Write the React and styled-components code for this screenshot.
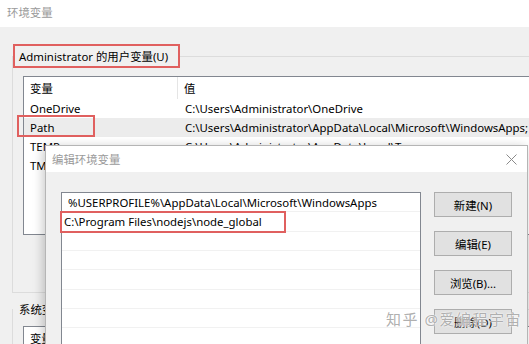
import React from 'react'
import styled, { createGlobalStyle } from 'styled-components'

const GlobalStyle = createGlobalStyle`
  html, body {
    margin: 0;
    padding: 0;
    background: #f0f0f0;
  }
  body {
    font-family: "Noto Sans", "Noto Sans CJK SC", sans-serif;
    font-size: 11.4px;
    color: #000;
  }
`

const Screen = styled.div`
  position: relative;
  width: 529px;
  height: 344px;
  overflow: hidden;
  background: #f0f0f0;
`

const MainWindow = styled.div`
  width: 600px;
`

const TitleBar = styled.div`
  height: 27px;
  background: #fff;
  display: flex;
  align-items: center;
  padding: 0 0 4px 7px;
  box-sizing: border-box;
  color: #9a9a9a;
`

const Body = styled.div`
  padding: 17px 0 0 12px;
`

const Group = styled.fieldset`
  margin: ${p => p.$top || 0}px 0 0 0;
  padding: ${p => p.$padTop}px 0 ${p => p.$padBottom}px 10px;
  border: 1px solid #dcdcdc;
  border-right: none;
  min-width: 0;
`

const Legend = styled.legend`
  margin-left: -10px;
  height: 24px;
  box-sizing: border-box;
  padding: 0 10px 0 4px;
  display: flex;
  align-items: center;
  border: 2px solid ${p => (p.$marked ? '#e0605f' : 'transparent')};
`

const ListBox = styled.div`
  height: ${p => p.$height}px;
  box-sizing: border-box;
  background: #fff;
  border: 1px solid #828790;
  border-right: none;
`

const ListHeader = styled.div`
  display: grid;
  grid-template-columns: 154px 1fr;
  height: 22px;
`

const HeaderCell = styled.div`
  display: flex;
  align-items: center;
  padding-left: 6px;
  border-right: ${p => (p.$divider ? '1px solid #e5e5e5' : 'none')};
`

const Row = styled.div`
  position: relative;
  display: grid;
  grid-template-columns: 154px 1fr;
  height: 19px;
  align-items: center;
  background: ${p => (p.$selected ? '#ececec' : 'transparent')};
  white-space: nowrap;
`

const Cell = styled.div`
  padding-left: ${p => (p.$value ? 7 : 6)}px;
`

const Mark = styled.div`
  position: absolute;
  left: ${p => p.$left}px;
  top: ${p => p.$top}px;
  width: ${p => p.$w}px;
  height: ${p => p.$h}px;
  box-sizing: border-box;
  border: 2px solid #e0605f;
  pointer-events: none;
`

const Dialog = styled.div`
  position: absolute;
  left: 45px;
  top: 145px;
  width: 481px;
  height: 230px;
  background: #f0f0f0;
  border: 1px solid #b5b5b5;
  box-shadow: -2px 2px 10px rgba(0, 0, 0, 0.22);
`

const DialogTitle = styled.div`
  height: 26px;
  background: #fff;
  display: flex;
  align-items: center;
  justify-content: space-between;
  padding: 0 10px 0 6px;
  color: #9a9a9a;
`

const CloseIcon = () => (
  <svg width="11" height="11" viewBox="0 0 11 11">
    <path d="M0.5 0.5 L10.5 10.5 M10.5 0.5 L0.5 10.5" stroke="#8a8a8a" strokeWidth="1" fill="none" />
  </svg>
)

const DialogBody = styled.div`
  display: flex;
  padding: 20px 14px 0 15px;
  gap: 13px;
`

const PathList = styled.div`
  width: 360px;
  height: 200px;
  box-sizing: border-box;
  background: #fff;
  border: 1px solid #828790;
`

const PathRow = styled.div`
  position: relative;
  height: 19.33px;
  box-sizing: border-box;
  display: flex;
  align-items: center;
  padding-left: ${p => (p.$editing ? 2 : 6)}px;
  border-bottom: 1px solid #f1f1f1;
  white-space: nowrap;
`

const ButtonColumn = styled.div`
  display: flex;
  flex-direction: column;
  gap: 14px;
`

const Button = styled.div`
  width: 78px;
  height: 25px;
  box-sizing: border-box;
  display: flex;
  align-items: center;
  justify-content: center;
  background: #e1e1e1;
  border: 1px solid #adadad;
`

const Watermark = styled.div`
  position: absolute;
  left: 386px;
  top: 308px;
  font-size: 15px;
  letter-spacing: 1.5px;
  color: rgba(165, 165, 165, 0.9);
  text-shadow: 0 0 2px #fff, 0 0 1px #fff;
  white-space: nowrap;
`

const userVars = [
  ['OneDrive', 'C:\\Users\\Administrator\\OneDrive'],
  ['Path', 'C:\\Users\\Administrator\\AppData\\Local\\Microsoft\\WindowsApps;'],
  ['TEMP', 'C:\\Users\\Administrator\\AppData\\Local\\Temp'],
  ['TMP', 'C:\\Users\\Administrator\\AppData\\Local\\Temp'],
]

const pathEntries = [
  '%USERPROFILE%\\AppData\\Local\\Microsoft\\WindowsApps',
  'C:\\Program Files\\nodejs\\node_global',
  '', '', '', '', '', '', '',
]

const App = () => {
  return (
    <Screen>
      <GlobalStyle />
      <MainWindow>
        <TitleBar>环境变量</TitleBar>
        <Body>
          <Group $padTop={8} $padBottom={57}>
            <Legend $marked>Administrator 的用户变量(U)</Legend>
            <ListBox $height={159}>
              <ListHeader>
                <HeaderCell $divider>变量</HeaderCell>
                <HeaderCell>值</HeaderCell>
              </ListHeader>
              {userVars.map(([name, value]) => (
                <Row key={name} $selected={name === 'Path'}>
                  <Cell>{name}</Cell>
                  <Cell $value>{value}</Cell>
                  {name === 'Path' && <Mark $left={-7} $top={-3} $w={78} $h={22} />}
                </Row>
              ))}
            </ListBox>
          </Group>
          <Group $top={4} $padTop={5} $padBottom={0}>
            <Legend>系统变量(S)</Legend>
            <ListBox $height={60}>
              <ListHeader>
                <HeaderCell $divider>变量</HeaderCell>
                <HeaderCell>值</HeaderCell>
              </ListHeader>
            </ListBox>
          </Group>
        </Body>
      </MainWindow>

      <Dialog>
        <DialogTitle>
          <span>编辑环境变量</span>
          <CloseIcon />
        </DialogTitle>
        <DialogBody>
          <PathList>
            {pathEntries.map((entry, i) => (
              <PathRow key={i} $editing={i === 1}>
                {entry}
                {i === 1 && <Mark $left={-2} $top={-1} $w={226} $h={22} />}
              </PathRow>
            ))}
          </PathList>
          <ButtonColumn>
            <Button>新建(N)</Button>
            <Button>编辑(E)</Button>
            <Button>浏览(B)...</Button>
            <Button>删除(D)</Button>
          </ButtonColumn>
        </DialogBody>
      </Dialog>

      <Watermark>知乎 @爱编程宇宙</Watermark>
    </Screen>
  )
}

export default App
